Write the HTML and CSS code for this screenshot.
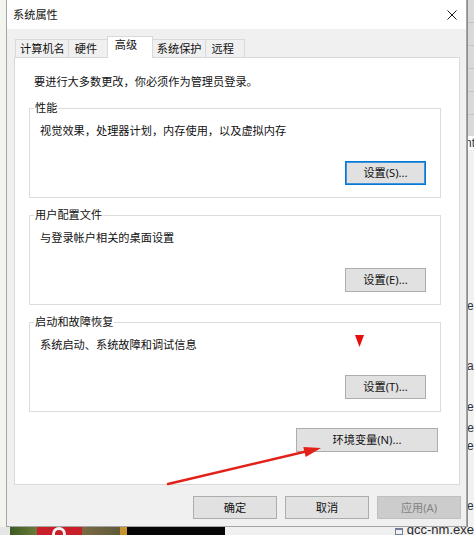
FILE: index.html
```html
<html lang="zh-CN">
<head>
    <meta charset="UTF-8">
    <meta name="viewport" content="width=device-width, initial-scale=1.0">
    <title>系统属性</title>
    <link rel="stylesheet" href="styles.css">
</head>
<body>
    <div class="screen">
        <div class="desk">
            <div class="gutter"></div>
            <div class="window">
                <div class="titlebar">
                    <span class="title">系统属性</span>
                    <span class="close">
                        <svg width="10" height="10" viewBox="0 0 10 10"><path d="M0.5 0.5L9.5 9.5M9.5 0.5L0.5 9.5" stroke="#1a1a1a" stroke-width="1"/></svg>
                    </span>
                </div>
                <div class="tabs">
                    <span class="tab">计算机名</span>
                    <span class="tab narrow">硬件</span>
                    <span class="tab active">高级</span>
                    <span class="tab">系统保护</span>
                    <span class="tab narrow">远程</span>
                </div>
                <div class="panel">
                    <p class="note">要进行大多数更改，你必须作为管理员登录。</p>
                    <fieldset class="group">
                        <legend>性能</legend>
                        <p>视觉效果，处理器计划，内存使用，以及虚拟内存</p>
                        <div class="row"><button class="btn default">设置(S)...</button></div>
                    </fieldset>
                    <fieldset class="group">
                        <legend>用户配置文件</legend>
                        <p>与登录帐户相关的桌面设置</p>
                        <div class="row"><button class="btn">设置(E)...</button></div>
                    </fieldset>
                    <fieldset class="group">
                        <legend>启动和故障恢复</legend>
                        <p>系统启动、系统故障和调试信息</p>
                        <div class="row"><button class="btn">设置(T)...</button></div>
                    </fieldset>
                    <div class="env"><button class="btn wide">环境变量(N)...</button></div>
                </div>
                <div class="actions">
                    <button class="btn action">确定</button>
                    <button class="btn action">取消</button>
                    <button class="btn action" disabled>应用(A)</button>
                </div>
            </div>
            <div class="behind">
                <div class="rows"></div>
                <div class="hit">nt</div>
                <div class="frag f1">e</div>
                <div class="frag f2">a</div>
                <div class="frag f3">e</div>
                <div class="frag f4">te</div>
                <div class="frag f5">e</div>
                <div class="frag f6">e</div>
            </div>
        </div>
        <div class="taskbar">
            <span class="tile grey"></span>
            <span class="tile green"></span>
            <span class="tile red"><span class="ring"></span></span>
            <span class="tile olive"></span>
            <span class="tile gold"></span>
            <span class="tile black"></span>
            <span class="files">
                <span class="file-icon"></span>
                <span class="file-name">qcc-nm.exe</span>
            </span>
        </div>

        <!-- red pen marks drawn on top of the dialog -->
        <svg class="marks" width="474" height="535" viewBox="0 0 474 535">
            <path d="M168 484L308 451" stroke="#e3211b" stroke-width="2.5" stroke-linecap="round"/>
            <path d="M321 448L303.3 447.1L305.7 456.9Z" fill="#e3211b"/>
            <path d="M355 335L364 335L359.5 347Z" fill="#e80d0d"/>
        </svg>
    </div>
</body>
</html>
```

FILE: styles.css
```css
* {
    box-sizing: border-box;
}

body {
    margin: 0;
    width: 474px;
    height: 535px;
    overflow: hidden;
    background: #f0f0f0;
    font-family: "Noto Sans", "Noto Sans CJK SC", sans-serif;
    font-size: 11.2px;
    line-height: 16px;
    color: #111;
}

.screen {
    position: relative;
    height: 535px;
}

.desk {
    display: flex;
    height: 527px;
}

.gutter {
    width: 6px;
    background: #f4f4ef;
}

/* dialog window */

.window {
    width: 461px;
    height: 527px;
    border: 1px solid #a5a5a5;
    border-top: 0;
    background: #f0f0f0;
    display: flex;
    flex-direction: column;
}

.titlebar {
    height: 29px;
    flex: none;
    background: #fff;
    display: flex;
    align-items: center;
    justify-content: space-between;
    padding-left: 6px;
}

.close {
    width: 28px;
    height: 29px;
    display: flex;
    align-items: center;
    justify-content: center;
}

.close svg {
    display: block;
}

.tabs {
    height: 28px;
    flex: none;
    display: flex;
    align-items: flex-end;
    padding-left: 8px;
}

.tab {
    height: 18px;
    border: 1px solid #d9d9d9;
    border-bottom: 0;
    margin-right: -1px;
    padding: 0 3px 0 4px;
    line-height: 17px;
    background: #f0f0f0;
    white-space: nowrap;
}

.tab.narrow {
    width: 40px;
    padding-left: 6px;
}

.tab.active {
    position: relative;
    z-index: 1;
    width: 46px;
    height: 22px;
    margin-bottom: -1px;
    padding-left: 7px;
    line-height: 16px;
    background: #fff;
}

.panel {
    height: 428px;
    flex: none;
    margin: 0 6px 0 7px;
    padding-top: 16px;
    background: #fff;
    border: 1px solid #d9d9d9;
}

.note {
    margin: 0 0 0 19px;
}

.group {
    margin: 10px 18px 0 14px;
    padding: 0 14px 12px 10px;
    border: 1px solid #dcdcdc;
    min-width: 0;
}

.group + .group {
    margin-top: 9px;
}

.group legend {
    padding: 0 1px;
    margin-left: -6px;
    line-height: 16px;
}

.group p {
    margin: 7px 0 0 0;
}

.row {
    display: flex;
    justify-content: flex-end;
    margin-top: 22px;
}

.env {
    display: flex;
    justify-content: flex-end;
    margin: 16px 21px 0 0;
}

/* buttons */

.btn {
    width: 81px;
    height: 24px;
    padding: 0;
    border: 1px solid #adadad;
    background: #e1e1e1;
    font: inherit;
    color: #111;
}

.btn.default {
    border-color: #0078d7;
    box-shadow: inset 0 0 0 1px #3d93dc;
}

.btn.wide {
    width: 142px;
}

.actions {
    display: flex;
    justify-content: flex-end;
    gap: 8px;
    padding: 11px 5px 0 0;
}

.btn.action {
    width: 84px;
    height: 23px;
}

.btn:disabled {
    background: #cccccc;
    border-color: #bfbfbf;
    color: #838383;
}

/* other windows showing at the edge */

.behind {
    width: 7px;
    overflow: hidden;
    border-left: 1px solid #8e8e8e;
    background: #f1f1f1;
    font-family: "Liberation Sans", sans-serif;
    font-size: 12px;
    line-height: 12px;
    color: #333;
}

.rows {
    height: 136px;
    background: repeating-linear-gradient(#d9d9d9 0 22px, #c4c4c4 22px 23px);
}

.hit {
    height: 14px;
    background: #fff;
    margin-left: -3px;
    line-height: 14px;
}

.frag {
    margin-left: -1px;
    white-space: nowrap;
}

.f1 { margin-top: 150px; }
.f2 { margin-top: 48px; }
.f3 { margin-top: 29px; }
.f4 { margin-top: 9px; margin-left: -4px; }
.f5 { margin-top: 6px; }
.f6 { margin-top: 48px; }

.taskbar {
    height: 8px;
    display: flex;
    overflow: hidden;
}

.tile {
    height: 8px;
}

.tile.grey { width: 10px; background: #e6e6e6; }
.tile.green { width: 27px; background: linear-gradient(90deg, #3b5a22, #6b7b3a); }
.tile.red {
    width: 45px;
    background: #c81f2b;
    display: flex;
    justify-content: center;
}
.tile.olive { width: 38px; background: linear-gradient(90deg, #7a6a44, #5e5a3a); }
.tile.gold { width: 7px; background: #c9922c; }
.tile.black { width: 98px; background: #060606; }

.ring {
    width: 14px;
    height: 14px;
    border: 3px solid #f2f2f2;
    border-radius: 50%;
}

.files {
    flex: 1;
    display: flex;
    padding-left: 170px;
    background: #f0f0f0;
}

.file-icon {
    width: 8px;
    height: 7px;
    margin-top: 1px;
    border: 1px solid #6f7f99;
    border-top-width: 2px;
}

.file-name {
    margin: -4px 0 0 4px;
    font-family: "Liberation Sans", sans-serif;
    font-size: 13px;
    line-height: 13px;
    color: #2a2a2a;
    white-space: nowrap;
}

.marks {
    position: absolute;
    top: 0;
    left: 0;
    pointer-events: none;
}
```
